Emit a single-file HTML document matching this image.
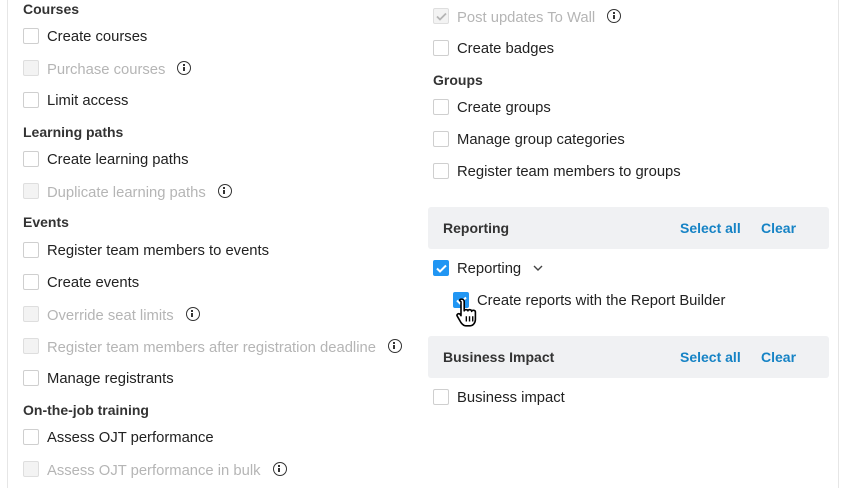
<!DOCTYPE html>
<html><head><meta charset="utf-8"><style>
*{margin:0;padding:0;box-sizing:border-box}
body{width:845px;height:488px;overflow:hidden;background:#fff;font-family:"Liberation Sans",sans-serif;position:relative;color:#222}
.bl{position:absolute;left:7px;top:0;width:1px;height:488px;background:#e6e6e6}
.br{position:absolute;left:838px;top:0;width:1px;height:488px;background:#e6e6e6}
.h{position:absolute;font-weight:bold;font-size:14px;color:#333}
.r{position:absolute;font-size:14.8px;line-height:16px;white-space:nowrap;height:16px}
.r .c{position:absolute;left:0;top:0;width:16px;height:16px;border:1px solid #cfcfcf;border-radius:2px;background:#fff}
.r span{position:absolute;left:24px;top:1px}
.r.d span{color:#b5b5b5}
.r.d .c{background:#f3f3f3;border-color:#dedede}
.i{display:inline-block;width:14px;height:14px;border:1.5px solid #333;border-radius:50%;margin-left:12px;vertical-align:-1px;position:relative}
.i:before{content:"";position:absolute;left:4.5px;top:2px;width:2px;height:2px;background:#333}
.i:after{content:"";position:absolute;left:4.5px;top:5px;width:2px;height:4px;background:#333}
.ck{background:#2196f3!important;border-color:#2196f3!important}
.ck svg,.dk svg{position:absolute;left:2px;top:3px}
.p{position:absolute;left:428px;width:401px;height:42px;background:#f0f1f3;border-radius:3px}
.p b{position:absolute;left:15px;top:13px;font-size:14px;color:#333}
.p .a{position:absolute;left:252px;top:13px;font-size:14px;font-weight:bold;color:#1683c5}
.p .b{position:absolute;left:333px;top:13px;font-size:14px;font-weight:bold;color:#1683c5}
</style></head><body>
<div class="bl"></div><div class="br"></div>

<div class="h" style="left:23px;top:1px">Courses</div>
<div class="r" style="left:23px;top:28px"><div class="c"></div><span>Create courses</span></div>
<div class="r d" style="left:23px;top:60px"><div class="c"></div><span>Purchase courses<i class="i"></i></span></div>
<div class="r" style="left:23px;top:92px"><div class="c"></div><span>Limit access</span></div>
<div class="h" style="left:23px;top:124px">Learning paths</div>
<div class="r" style="left:23px;top:151px"><div class="c"></div><span>Create learning paths</span></div>
<div class="r d" style="left:23px;top:183px"><div class="c"></div><span>Duplicate learning paths<i class="i"></i></span></div>
<div class="h" style="left:23px;top:214px">Events</div>
<div class="r" style="left:23px;top:242px"><div class="c"></div><span>Register team members to events</span></div>
<div class="r" style="left:23px;top:274px"><div class="c"></div><span>Create events</span></div>
<div class="r d" style="left:23px;top:306px"><div class="c"></div><span>Override seat limits<i class="i"></i></span></div>
<div class="r d" style="left:23px;top:338px"><div class="c"></div><span>Register team members after registration deadline<i class="i"></i></span></div>
<div class="r" style="left:23px;top:370px"><div class="c"></div><span>Manage registrants</span></div>
<div class="h" style="left:23px;top:402px">On-the-job training</div>
<div class="r" style="left:23px;top:429px"><div class="c"></div><span>Assess OJT performance</span></div>
<div class="r d" style="left:23px;top:461px"><div class="c"></div><span>Assess OJT performance in bulk<i class="i"></i></span></div>

<div class="r d" style="left:433px;top:8px"><div class="c dk"><svg width="11" height="9" viewBox="0 0 11 9" style="left:2px;top:3px"><path d="M1 4.5l3 3 6-6" stroke="#b5b5b5" stroke-width="1.8" fill="none"/></svg></div><span>Post updates To Wall<i class="i"></i></span></div>
<div class="r" style="left:433px;top:40px"><div class="c"></div><span>Create badges</span></div>
<div class="h" style="left:433px;top:72px">Groups</div>
<div class="r" style="left:433px;top:99px"><div class="c"></div><span>Create groups</span></div>
<div class="r" style="left:433px;top:131px"><div class="c"></div><span>Manage group categories</span></div>
<div class="r" style="left:433px;top:163px"><div class="c"></div><span>Register team members to groups</span></div>

<div class="p" style="top:207px"><b>Reporting</b><span class="a">Select all</span><span class="b">Clear</span></div>
<div class="r" style="left:433px;top:260px"><div class="c ck"><svg width="11" height="9" viewBox="0 0 11 9"><path d="M1 4.5l3 3 6-6" stroke="#fff" stroke-width="2" fill="none"/></svg></div><span>Reporting <svg width="10" height="6" viewBox="0 0 10 6" style="margin-left:8px;vertical-align:2px"><path d="M1 1l4 4 4-4" stroke="#444" stroke-width="1.4" fill="none"/></svg></span></div>
<div class="r" style="left:453px;top:292px"><div class="c ck"><svg width="11" height="9" viewBox="0 0 11 9"><path d="M1 4.5l3 3 6-6" stroke="#fff" stroke-width="2" fill="none"/></svg></div><span>Create reports with the Report Builder</span></div>
<svg style="position:absolute;left:455px;top:297px" width="28" height="32" viewBox="0 0 26 30"><path d="M6 2c1.5 0 2.5 1 2.5 2.5V13c0-1.5 3.5-1.5 3.5 0 0-1.5 3.5-1.5 3.5 0.5 0-1.5 3.5-1.5 3.5 0.5V21c0 3-2 6-5 6h-4c-2 0-3-1-4.5-3L2 18c-1-1.5 1-3 2.5-2l1 1.5V4.5C3.5 3 4.5 2 6 2z" fill="#fff" stroke="#000" stroke-width="1.5" stroke-linejoin="round"/><path d="M10.5 18v5M13.5 18v5M16.5 18v5" stroke="#000" stroke-width="1.3"/></svg>

<div class="p" style="top:336px"><b>Business Impact</b><span class="a">Select all</span><span class="b">Clear</span></div>
<div class="r" style="left:433px;top:389px"><div class="c"></div><span>Business impact</span></div>
</body></html>
